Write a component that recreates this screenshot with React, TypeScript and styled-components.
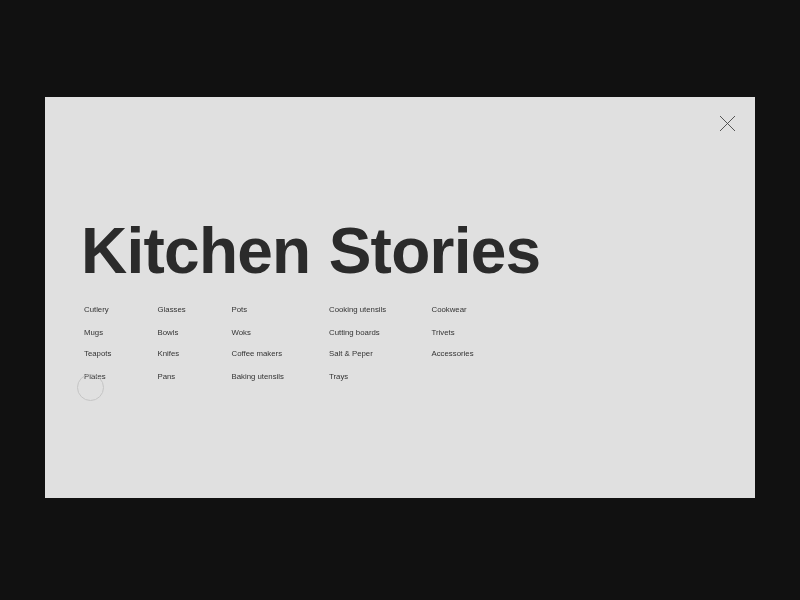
import React from 'react';
import styled, { createGlobalStyle } from 'styled-components';

const columns = [
  ['Cutlery', 'Mugs', 'Teapots', 'Plates'],
  ['Glasses', 'Bowls', 'Knifes', 'Pans'],
  ['Pots', 'Woks', 'Coffee makers', 'Baking utensils'],
  ['Cooking utensils', 'Cutting boards', 'Salt & Peper', 'Trays'],
  ['Cookwear', 'Trivets', 'Accessories'],
];

const GlobalStyle = createGlobalStyle`
  html, body {
    margin: 0;
    background: #111111;
  }
`;

const Page = styled.div`
  height: 600px;
  padding: 97px 45px 0;
  box-sizing: border-box;
  font-family: "Liberation Sans", Arial, sans-serif;
`;

const Panel = styled.section`
  position: relative;
  height: 401px;
  padding: 116px 36px 0;
  box-sizing: border-box;
  background: #e0e0e0;
`;

const CloseButton = styled.button`
  position: absolute;
  top: 18px;
  right: 19px;
  width: 18px;
  height: 18px;
  padding: 0;
  border: 0;
  background: none;
  line-height: 0;
`;

const Title = styled.h1`
  margin: 0;
  font-size: 64px;
  line-height: 76px;
  font-weight: 700;
  letter-spacing: -0.75px;
  word-spacing: 1.2px;
  color: #2b2b2b;
  will-change: transform;
`;

const Menu = styled.div`
  display: flex;
  margin: 14px 0 0 3px;
  will-change: transform;
`;

const Column = styled.ul<{ $width: number }>`
  width: ${(props) => props.$width}px;
  margin: 0;
  padding: 0;
  list-style: none;
`;

const Item = styled.li`
  height: 21px;
  font-size: 7.8px;
  line-height: 14px;
  color: #333333;
  &:nth-child(odd) {
    height: 23px;
  }
`;

const Cursor = styled.div`
  position: absolute;
  left: 32px;
  top: 277px;
  width: 27px;
  height: 27px;
  box-sizing: border-box;
  border: 1px solid #c4c4c4;
  border-radius: 50%;
`;

const widths = [73.5, 74, 97.5, 102.5, 80];

export default function App() {
  return (
    <>
      <GlobalStyle />
      <Page>
        <Panel>
          <CloseButton aria-label="Close">
            <svg width="18" height="18" viewBox="0 0 18 18">
              <path d="M2 1 L17 16 M17 1 L2 16" stroke="#444" strokeWidth="0.9" fill="none" />
            </svg>
          </CloseButton>
          <Title>Kitchen Stories</Title>
          <Menu>
            {columns.map((items, i) => (
              <Column key={i} $width={widths[i]}>
                {items.map((item) => (
                  <Item key={item}>{item}</Item>
                ))}
              </Column>
            ))}
          </Menu>
          <Cursor />
        </Panel>
      </Page>
    </>
  );
}
